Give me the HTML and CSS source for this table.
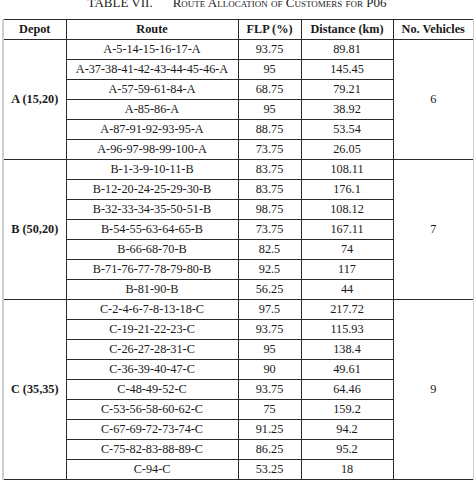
FILE: index.html
```html
<!DOCTYPE html>
<html>
<head>
<meta charset="utf-8">
<link rel="stylesheet" href="styles.css">
</head>
<body>
<div class="title"><span class="tno">TABLE VII.</span><span class="tname">Route Allocation of Customers for P06</span></div>
<table class="routes">
  <colgroup>
    <col class="c-depot"><col class="c-route"><col class="c-flp"><col class="c-dist"><col class="c-veh">
  </colgroup>
  <thead>
    <tr><th>Depot</th><th>Route</th><th>FLP (%)</th><th>Distance (km)</th><th>No. Vehicles</th></tr>
  </thead>
  <tbody>
    <tr><td rowspan="6" class="depot depot-a">A (15,20)</td><td>A-5-14-15-16-17-A</td><td>93.75</td><td>89.81</td><td rowspan="6" class="veh veh-a">6</td></tr>
    <tr><td>A-37-38-41-42-43-44-45-46-A</td><td>95</td><td>145.45</td></tr>
    <tr><td>A-57-59-61-84-A</td><td>68.75</td><td>79.21</td></tr>
    <tr><td>A-85-86-A</td><td>95</td><td>38.92</td></tr>
    <tr><td>A-87-91-92-93-95-A</td><td>88.75</td><td>53.54</td></tr>
    <tr><td>A-96-97-98-99-100-A</td><td>73.75</td><td>26.05</td></tr>

    <tr><td rowspan="7" class="depot depot-b">B (50,20)</td><td>B-1-3-9-10-11-B</td><td>83.75</td><td>108.11</td><td rowspan="7" class="veh veh-b">7</td></tr>
    <tr><td>B-12-20-24-25-29-30-B</td><td>83.75</td><td>176.1</td></tr>
    <tr><td>B-32-33-34-35-50-51-B</td><td>98.75</td><td>108.12</td></tr>
    <tr><td>B-54-55-63-64-65-B</td><td>73.75</td><td>167.11</td></tr>
    <tr><td>B-66-68-70-B</td><td>82.5</td><td>74</td></tr>
    <tr><td>B-71-76-77-78-79-80-B</td><td>92.5</td><td>117</td></tr>
    <tr><td>B-81-90-B</td><td>56.25</td><td>44</td></tr>

    <tr><td rowspan="9" class="depot">C (35,35)</td><td>C-2-4-6-7-8-13-18-C</td><td>97.5</td><td>217.72</td><td rowspan="9" class="veh veh-c">9</td></tr>
    <tr><td>C-19-21-22-23-C</td><td>93.75</td><td>115.93</td></tr>
    <tr><td>C-26-27-28-31-C</td><td>95</td><td>138.4</td></tr>
    <tr><td>C-36-39-40-47-C</td><td>90</td><td>49.61</td></tr>
    <tr><td>C-48-49-52-C</td><td>93.75</td><td>64.46</td></tr>
    <tr><td>C-53-56-58-60-62-C</td><td>75</td><td>159.2</td></tr>
    <tr><td>C-67-69-72-73-74-C</td><td>91.25</td><td>94.2</td></tr>
    <tr><td>C-75-82-83-88-89-C</td><td>86.25</td><td>95.2</td></tr>
    <tr><td>C-94-C</td><td>53.25</td><td>18</td></tr>
  </tbody>
</table>
</body>
</html>
```
FILE: styles.css
```css
html, body {
  margin: 0;
  padding: 0;
  background: #ffffff;
}
body {
  font-family: "Liberation Serif", "Times New Roman", Times, serif;
  color: #1a1a1a;
  overflow: hidden;
}
.title {
  font-family: "Liberation Serif", "Times New Roman", Times, serif;
  font-size: 13px;
  line-height: 13px;
  text-align: center;
  margin-top: -4px;
  margin-bottom: 10px;
  white-space: nowrap;
  color: #222;
}
.tno {
  margin-right: 20px;
}
.tname {
  font-variant: small-caps;
}
.routes {
  font-family: "Liberation Serif", "Times New Roman", Times, serif;
  border-collapse: collapse;
  margin-left: 2px;
  width: 471px;
  table-layout: fixed;
  font-size: 12.25px;
  border-left: 2px solid #cfcfcf;
  border-right: 2px solid #cfcfcf;
}
.c-depot { width: 63px; }
.c-route { width: 172px; }
.c-flp { width: 63px; }
.c-dist { width: 92px; }
.c-veh { width: 81px; }
.routes tr {
  height: 20px;
}
.routes th,
.routes td {
  font-family: "Liberation Serif", "Times New Roman", Times, serif;
  border: 1px solid #2a2a2a;
  text-align: center;
  vertical-align: middle;
  padding: 0;
  white-space: nowrap;
  line-height: 13px;
}
.routes th {
  font-weight: bold;
  font-size: 12.25px;
}
.routes td {
  font-size: 12.25px;
}
.routes th:first-child,
.routes td.depot {
  border-left: 2px solid #cfcfcf;
}
.routes th:last-child,
.routes td.veh {
  border-right: 2px solid #cfcfcf;
}
.routes td.depot {
  font-weight: bold;
}
.depot-a {
  padding-bottom: 14px;
}
.depot-b,
.veh-b {
  padding-top: 3px;
}
.veh-c {
  padding-top: 18px;
}
```
